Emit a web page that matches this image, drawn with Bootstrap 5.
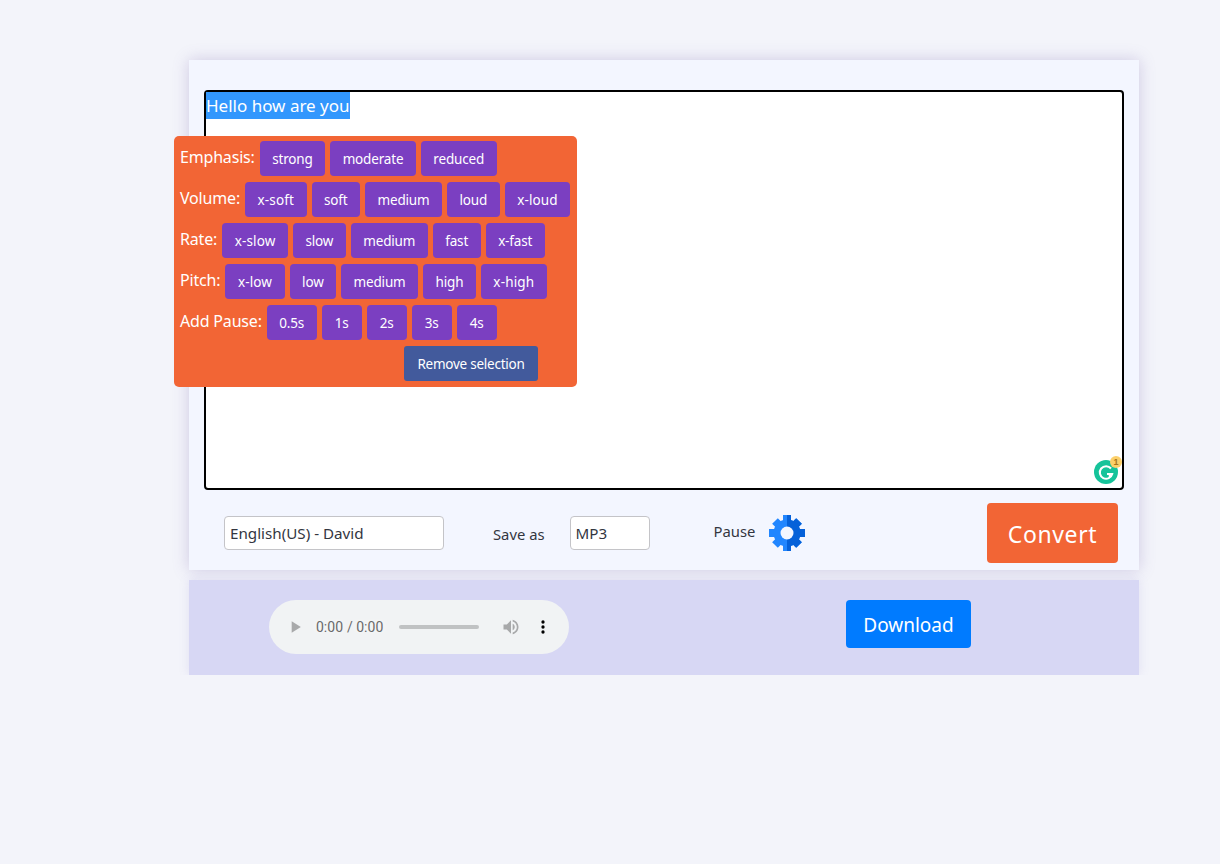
<!DOCTYPE html>
<html lang="en">
<head>
    <meta charset="UTF-8">
    <meta name="viewport" content="width=device-width, initial-scale=1.0">
    <title>Text to Speech</title>
    <link href="https://cdn.jsdelivr.net/npm/bootstrap@5.3.0/dist/css/bootstrap.min.css" rel="stylesheet">
    <style>
        body { background: #f3f4fa; font-family: "Noto Sans", "Open Sans", sans-serif; color: #33363f; }
        .page { width: 950px; margin-left: 189px; padding-top: 60px; }
        .editor-panel { height: 510px; padding: 30px 15px 0; background: #f3f6ff; box-shadow: 0 0 15px rgba(110, 90, 170, .28); }
        .editor { position: relative; height: 400px; background: #fff; border: 2px solid #000; border-radius: 4px; font-size: 17px; line-height: 27px; }
        .editor .picked { display: inline-block; background: #3297fd; color: #fff; }
        .ssml-menu { position: absolute; left: -32px; top: 44px; width: 403px; height: 251px; padding: 5px 6px; background: #f26535; border-radius: 5px; color: #fff; }
        .ssml-row { height: 41px; gap: 5px; }
        .ssml-row label { font-size: 16px; line-height: 24px; letter-spacing: -.18px; margin-top: 4px; }
        .btn.ssml { height: 35px; min-width: 40px; padding: 1px 12.5px 0; font-size: 13.5px; line-height: 34px; letter-spacing: -.17px; color: #fff; background: #7b3fc1; border: 0; border-radius: 4px; }
        .btn.ssml.dash { letter-spacing: .15px; }
        .btn.remove { height: 35px; width: 134px; margin: 0 33px 0 auto; padding: 2px 0 0; font-size: 13.5px; letter-spacing: -.25px; color: #fff; background: #425a9c; border: 0; border-radius: 3px; }
        .grammarly { position: absolute; right: 0; bottom: 4px; }
        .controls { height: 80px; padding: 13px 6px 0 20px; font-size: 14.8px; }
        .field { height: 34px; margin-top: 13px; padding: 0 5px; font-size: 15.2px; color: #33363f; background: #fff; border: 1px solid #c4c4c8; border-radius: 4px; line-height: 33px; }
        .voice { width: 220px; margin-right: 49px; }
        .save-as { margin: 21px 25px 0 0; line-height: 21px; }
        .format { width: 80px; margin-right: 64px; }
        .pause-label { margin: 18px 14px 0 0; line-height: 21px; }
        .gear { margin-top: 12px; }
        .btn.convert { width: 131px; height: 60px; margin-left: auto; padding: 2px 0 0; font-size: 23px; letter-spacing: .6px; color: #fff; background: #f26535; border: 0; border-radius: 4px; }
        .result-panel { height: 95px; margin-top: 10px; padding: 20px 0 0 80px; background: #d7d7f4; box-shadow: 0 0 10px rgba(120, 110, 200, .15); }
        .result-panel audio { width: 300px; height: 54px; margin-right: 277px; }
        audio::-webkit-media-controls-current-time-display,
        audio::-webkit-media-controls-time-remaining-display { color: #555; }
        .btn.download { width: 125px; height: 48px; padding: 2px 0 0; font-size: 19px; color: #fff; background: #007bff; border: 0; border-radius: 4px; }
    </style>
</head>
<body>
    <div class="page">
        <!-- Editor -->
        <div class="editor-panel">
            <div class="editor">
                <span class="picked">Hello how are you</span>
                <div class="ssml-menu">
                    <div class="ssml-row d-flex align-items-start">
                        <label>Emphasis:</label>
                        <button class="btn ssml">strong</button><button class="btn ssml">moderate</button><button class="btn ssml">reduced</button>
                    </div>
                    <div class="ssml-row d-flex align-items-start">
                        <label>Volume:</label>
                        <button class="btn ssml dash">x-soft</button><button class="btn ssml">soft</button><button class="btn ssml">medium</button><button class="btn ssml">loud</button><button class="btn ssml dash">x-loud</button>
                    </div>
                    <div class="ssml-row d-flex align-items-start">
                        <label>Rate:</label>
                        <button class="btn ssml dash">x-slow</button><button class="btn ssml">slow</button><button class="btn ssml">medium</button><button class="btn ssml">fast</button><button class="btn ssml">x-fast</button>
                    </div>
                    <div class="ssml-row d-flex align-items-start">
                        <label>Pitch:</label>
                        <button class="btn ssml dash">x-low</button><button class="btn ssml">low</button><button class="btn ssml">medium</button><button class="btn ssml">high</button><button class="btn ssml dash">x-high</button>
                    </div>
                    <div class="ssml-row d-flex align-items-start">
                        <label>Add Pause:</label>
                        <button class="btn ssml">0.5s</button><button class="btn ssml">1s</button><button class="btn ssml">2s</button><button class="btn ssml">3s</button><button class="btn ssml">4s</button>
                    </div>
                    <div class="d-flex">
                        <button class="btn remove">Remove selection</button>
                    </div>
                </div>
                <svg class="grammarly" width="28" height="30" viewBox="0 0 28 30">
                    <circle cx="12" cy="18" r="12" fill="#15c39a"/>
                    <path d="M17 14.500a6.300 6.300 0 1 0 1.200 5.500h-5.200" fill="none" stroke="#fff" stroke-width="2"/>
                    <path d="M15.500 20v3.500M18 20l-2.500 3" fill="none" stroke="#fff" stroke-width="1.500"/>
                    <circle cx="22" cy="8" r="6" fill="#fcd06a"/>
                    <text x="22" y="11" font-size="9" font-weight="700" text-anchor="middle" fill="#a8741a" font-family="Liberation Sans, sans-serif">1</text>
                </svg>
            </div>
            <!-- Options -->
            <div class="controls d-flex align-items-start">
                <div class="field voice">English(US) - David</div>
                <span class="save-as">Save as</span>
                <div class="field format">MP3</div>
                <span class="pause-label">Pause</span>
                <svg class="gear" width="36" height="36" viewBox="0 0 36 36">
                    <defs>
                        <g id="cog">
                            <rect x="14" y="0" width="8" height="36"/>
                            <rect x="0" y="14" width="36" height="8"/>
                            <rect x="14" y="1" width="8" height="34" transform="rotate(45 18 18)"/>
                            <rect x="14" y="1" width="8" height="34" transform="rotate(-45 18 18)"/>
                            <circle cx="18" cy="18" r="13.500"/>
                        </g>
                        <clipPath id="rightHalf"><rect x="18" y="0" width="18" height="36"/></clipPath>
                    </defs>
                    <use href="#cog" fill="#2186ff"/>
                    <g clip-path="url(#rightHalf)"><use href="#cog" fill="#0561d9"/></g>
                    <circle cx="18" cy="18" r="6.500" fill="#f3f6ff"/>
                </svg>
                <button class="btn convert">Convert</button>
            </div>
        </div>
        <!-- Result -->
        <div class="result-panel d-flex align-items-start">
            <audio controls></audio>
            <button class="btn download">Download</button>
        </div>
    </div>
    <script src="https://cdn.jsdelivr.net/npm/bootstrap@5.3.0/dist/js/bootstrap.bundle.min.js"></script>
</body>
</html>
